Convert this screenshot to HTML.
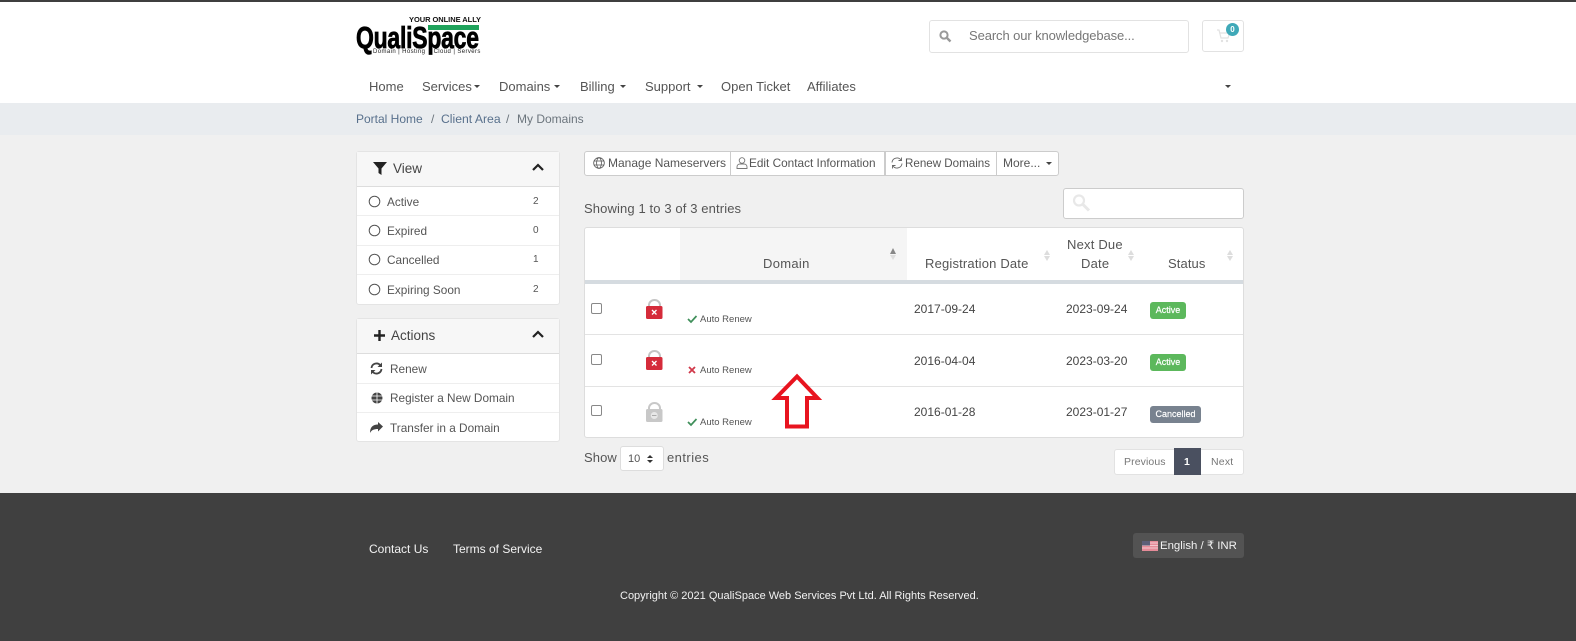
<!DOCTYPE html>
<html><head><meta charset="utf-8"><title>My Domains</title>
<style>
html,body{margin:0;padding:0}
body{width:1576px;height:641px;position:relative;overflow:hidden;background:#f0f0f0;font-family:"Liberation Sans",sans-serif;color:#555;font-size:13px}
.a{position:absolute;box-sizing:border-box}
.t{position:absolute;white-space:nowrap;line-height:20px;height:20px}
.box{position:absolute;box-sizing:border-box;background:#fff;border:1px solid #ddd;border-radius:3px}
.line{position:absolute;height:1px;background:#eee}
.caret{position:absolute;width:0;height:0;border-left:3px solid transparent;border-right:3px solid transparent;border-top:3px solid #444}
svg{position:absolute;overflow:visible}
.cb{position:absolute;width:11px;height:11px;border:1px solid #888;border-radius:2px;background:#fff;box-sizing:border-box}
.badge{position:absolute;border-radius:3px;color:#fff;font-size:9px;text-align:center;height:17px;line-height:17px;-webkit-text-stroke:.2px #fff}
.sort{position:absolute;width:0;height:0;border-left:3px solid transparent;border-right:3px solid transparent}
.s{font-size:11.800px}
.d{font-size:12px;color:#444}
.ar{font-size:9.500px}
</style></head><body>
<div class="a" style="left:0;top:0;width:1576px;height:2px;background:#3f3f3f"></div>
<div class="a" style="left:0;top:2px;width:1576px;height:101px;background:#fff"></div>
<div class="a" style="left:0;top:103px;width:1576px;height:32px;background:#e9ecef"></div>
<div class="t" style="left:409px;top:10px;font-size:7.500px;font-weight:bold;color:#111;letter-spacing:-.05px">YOUR ONLINE ALLY</div>
<div class="a" style="left:428px;top:25px;width:51px;height:5px;background:#1fa35c"></div>
<div class="t" style="left:356px;top:26px;font-size:31px;line-height:24px;height:24px;font-weight:bold;color:#000;letter-spacing:-.3px;transform-origin:left top;transform:scaleX(.74);-webkit-text-stroke:.8px #000">QualiSpace</div>
<div class="t" style="left:373px;top:42px;font-size:6px;color:#222;letter-spacing:.4px">Domain | Hosting&nbsp;&nbsp;&nbsp;&nbsp;Cloud | Servers</div>
<div class="t" style="left:369px;top:77px">Home</div>
<div class="t" style="left:422px;top:77px">Services</div><div class="caret" style="left:474px;top:85px"></div>
<div class="t" style="left:499px;top:77px">Domains</div><div class="caret" style="left:554px;top:85px"></div>
<div class="t" style="left:580px;top:77px">Billing</div><div class="caret" style="left:620px;top:85px"></div>
<div class="t" style="left:645px;top:77px">Support</div><div class="caret" style="left:697px;top:85px"></div>
<div class="t" style="left:721px;top:77px">Open Ticket</div>
<div class="t" style="left:807px;top:77px">Affiliates</div>
<div class="caret" style="left:1225px;top:85px"></div>
<div class="box" style="left:929px;top:20px;width:260px;height:33px;border-color:#e2e2e2"></div>
<svg style="left:939px;top:30px" width="13" height="13" viewBox="0 0 13 13"><circle cx="5" cy="5" r="3.600" fill="none" stroke="#999" stroke-width="2"/><path d="M8 8l3.500 3.500" stroke="#999" stroke-width="2.400"/></svg>
<div class="t" style="left:969px;top:26px;color:#777;letter-spacing:-.1px">Search our knowledgebase...</div>
<div class="box" style="left:1202px;top:20px;width:42px;height:32px;border-color:#e2e2e2"></div>
<svg style="left:1216px;top:29px" width="15" height="14" viewBox="0 0 15 14"><path d="M1 1h2l2 8h7l1.500-5H4" fill="none" stroke="#e2e2e2" stroke-width="1.200"/><circle cx="6" cy="12" r="1.200" fill="#e2e2e2"/><circle cx="11" cy="12" r="1.200" fill="#e2e2e2"/></svg>
<div class="a" style="left:1226px;top:23px;width:13px;height:13px;border-radius:50%;background:#3fa9b8;color:#fff;font-size:8px;font-weight:bold;text-align:center;line-height:13px">0</div>

<div class="t" style="left:356px;top:109px;font-size:12px;color:#58708c">Portal Home</div>
<div class="t" style="left:431px;top:109px;font-size:12px;color:#6c757d">/</div>
<div class="t" style="left:441px;top:109px;font-size:12.200px;color:#58708c">Client Area</div>
<div class="t" style="left:506px;top:109px;font-size:12px;color:#6c757d">/</div>
<div class="t" style="left:517px;top:109px;font-size:12px;color:#6c757d">My Domains</div>

<div class="box" style="left:356px;top:151px;width:204px;height:154px;border-color:#e4e4e4"></div>
<div class="a" style="left:357px;top:152px;width:202px;height:35px;background:#f7f7f7;border-bottom:1px solid #ddd"></div>
<svg style="left:373px;top:161px" width="14" height="14" viewBox="0 0 14 14"><path d="M0 1h14L8.500 7.500V14L5.500 12V7.500z" fill="#222"/></svg>
<div class="t" style="left:393px;top:159px;font-size:13.500px;color:#444">View</div>
<svg style="left:532px;top:163px" width="12" height="8" viewBox="0 0 12 8"><path d="M1 7l5-5 5 5" fill="none" stroke="#222" stroke-width="2.200"/></svg>
<div class="line" style="left:357px;top:215px;width:202px"></div>
<div class="line" style="left:357px;top:245px;width:202px"></div>
<div class="line" style="left:357px;top:274px;width:202px"></div>
<svg style="left:368px;top:195px" width="13" height="100" viewBox="0 0 13 100" fill="none" stroke="#555" stroke-width="1"><circle cx="6.500" cy="6.500" r="5.300"/><circle cx="6.500" cy="35.500" r="5.300"/><circle cx="6.500" cy="64.500" r="5.300"/><circle cx="6.500" cy="94.500" r="5.300"/></svg>
<div class="t s" style="left:387px;top:192px">Active</div><div class="t" style="left:533px;top:192px;font-size:10px">2</div>
<div class="t s" style="left:387px;top:221px">Expired</div><div class="t" style="left:533px;top:221px;font-size:10px">0</div>
<div class="t s" style="left:387px;top:250px">Cancelled</div><div class="t" style="left:533px;top:250px;font-size:10px">1</div>
<div class="t s" style="left:387px;top:280px">Expiring Soon</div><div class="t" style="left:533px;top:280px;font-size:10px">2</div>

<div class="box" style="left:356px;top:318px;width:204px;height:124px;border-color:#e4e4e4"></div>
<div class="a" style="left:357px;top:319px;width:202px;height:35px;background:#f7f7f7;border-bottom:1px solid #ddd"></div>
<svg style="left:373px;top:329px" width="13" height="13" viewBox="0 0 13 13"><path d="M6.500 1v11M1 6.500h11" stroke="#222" stroke-width="2.400"/></svg>
<div class="t" style="left:391px;top:326px;font-size:13.500px;color:#444">Actions</div>
<svg style="left:532px;top:330px" width="12" height="8" viewBox="0 0 12 8"><path d="M1 7l5-5 5 5" fill="none" stroke="#222" stroke-width="2.200"/></svg>
<div class="line" style="left:357px;top:383px;width:202px"></div>
<div class="line" style="left:357px;top:412px;width:202px"></div>
<svg style="left:370px;top:362px" width="13" height="13" viewBox="0 0 13 13" fill="none" stroke="#444" stroke-width="1.800"><path d="M1.500 6A5 5 0 0 1 10.500 3.500"/><path d="M11.500 7A5 5 0 0 1 2.500 9.500"/><path d="M12 0.500V5H7.500z" fill="#444" stroke="none"/><path d="M1 12.500V8h4.500z" fill="#444" stroke="none"/></svg>
<svg style="left:371px;top:392px" width="12" height="12" viewBox="0 0 12 12"><circle cx="6" cy="6" r="5.500" fill="#444"/><path d="M0 4h12M0 8h12M6 0v12" stroke="#fff" stroke-width=".8"/></svg>
<svg style="left:370px;top:422px" width="13" height="12" viewBox="0 0 13 12"><path d="M13 4.500L8 0v2.500C3 2.500 0 5 0 11c1.500-3 4-4 8-4v2.500z" fill="#444"/></svg>
<div class="t s" style="left:390px;top:359px">Renew</div>
<div class="t s" style="left:390px;top:388px">Register a New Domain</div>
<div class="t s" style="left:390px;top:418px">Transfer in a Domain</div>

<div class="box" style="left:584px;top:151px;width:475px;height:25px;border-color:#ccc"></div>
<div class="a" style="left:730px;top:151px;width:1px;height:25px;background:#ccc"></div>
<div class="a" style="left:884px;top:151px;width:2px;height:25px;background:#ccc"></div>
<div class="a" style="left:996px;top:151px;width:1px;height:25px;background:#ccc"></div>
<svg style="left:593px;top:157px" width="12" height="12" viewBox="0 0 12 12" fill="none" stroke="#555" stroke-width=".8"><circle cx="6" cy="6" r="5.300"/><ellipse cx="6" cy="6" rx="2.400" ry="5.300"/><path d="M.7 4h10.600M.7 8h10.600"/></svg>
<div class="t" style="left:608px;top:153px;font-size:12px">Manage Nameservers</div>
<svg style="left:736px;top:157px" width="12" height="12" viewBox="0 0 12 12" fill="none" stroke="#777" stroke-width=".9"><circle cx="6" cy="3.500" r="2.800"/><path d="M1 11.500V10c0-2 1.500-3 3-3h4c1.500 0 3 1 3 3v1.500z"/></svg>
<div class="t" style="left:749px;top:153px;font-size:11.800px">Edit Contact Information</div>
<svg style="left:891px;top:157px" width="12" height="12" viewBox="0 0 12 12" fill="none" stroke="#666" stroke-width=".9"><path d="M1 5.500A5 5 0 0 1 10 3"/><path d="M11 6.500A5 5 0 0 1 2 9"/><path d="M10.500 .5V3.500H7.500M1.500 11.500V8.500H4.500"/></svg>
<div class="t" style="left:905px;top:154px;font-size:11.600px">Renew Domains</div>
<div class="t" style="left:1003px;top:153px;font-size:12px">More...</div>
<div class="caret" style="left:1046px;top:162px"></div>

<div class="t" style="left:584px;top:199px;letter-spacing:.12px">Showing 1 to 3 of 3 entries</div>
<div class="box" style="left:1063px;top:188px;width:181px;height:31px;border-color:#ccc"></div>
<svg style="left:1071px;top:193px" width="20" height="20" viewBox="0 0 20 20"><circle cx="8" cy="7.500" r="5" fill="none" stroke="#e8e8e8" stroke-width="2.200"/><path d="M12 11.500l6 6" stroke="#e8e8e8" stroke-width="3"/></svg>

<div class="box" style="left:584px;top:227px;width:660px;height:211px;border-color:#ddd"></div>
<div class="a" style="left:680px;top:228px;width:227px;height:52px;background:#f5f5f5"></div>
<div class="a" style="left:585px;top:280px;width:658px;height:4px;background:#d5dbe0"></div>
<div class="line" style="left:585px;top:334px;width:658px;background:#e3e3e3"></div>
<div class="line" style="left:585px;top:386px;width:658px;background:#e3e3e3"></div>
<div class="t" style="left:763px;top:254px;letter-spacing:.3px">Domain</div>
<div class="t" style="left:925px;top:254px;letter-spacing:.18px">Registration Date</div>
<div class="t" style="left:1067px;top:235px;letter-spacing:.2px">Next Due</div>
<div class="t" style="left:1081px;top:254px;letter-spacing:.2px">Date</div>
<div class="t" style="left:1168px;top:254px;letter-spacing:.1px">Status</div>
<div class="sort" style="left:890px;top:248px;border-bottom:6px solid #888"></div><div class="sort" style="left:890px;top:255px;border-top:5px solid #ddd"></div>
<div class="sort" style="left:1044px;top:250px;border-bottom:5px solid #ddd"></div><div class="sort" style="left:1044px;top:256px;border-top:5px solid #ddd"></div>
<div class="sort" style="left:1128px;top:250px;border-bottom:5px solid #ddd"></div><div class="sort" style="left:1128px;top:256px;border-top:5px solid #ddd"></div>
<div class="sort" style="left:1227px;top:250px;border-bottom:5px solid #ddd"></div><div class="sort" style="left:1227px;top:256px;border-top:5px solid #ddd"></div>

<div class="cb" style="left:591px;top:303px"></div><div class="cb" style="left:591px;top:354px"></div><div class="cb" style="left:591px;top:405px"></div>
<svg style="left:646px;top:299px" width="17" height="20" viewBox="0 0 17 20"><path d="M3 9V6a5.500 5 0 0 1 11 0v3" fill="none" stroke="#c4c4c4" stroke-width="2"/><rect y="7" width="16.500" height="13" rx="1.500" fill="#d52b3a"/><path d="M6 11l4.500 4.500M10.500 11L6 15.500" stroke="#fff" stroke-width="1.300"/></svg>
<svg style="left:646px;top:350px" width="17" height="20" viewBox="0 0 17 20"><path d="M3 9V6a5.500 5 0 0 1 11 0v3" fill="none" stroke="#c4c4c4" stroke-width="2"/><rect y="7" width="16.500" height="13" rx="1.500" fill="#d52b3a"/><path d="M6 11l4.500 4.500M10.500 11L6 15.500" stroke="#fff" stroke-width="1.300"/></svg>
<svg style="left:646px;top:402px" width="17" height="20" viewBox="0 0 17 20"><path d="M3 9V6a5.500 5 0 0 1 11 0v3" fill="none" stroke="#c8c8c8" stroke-width="2"/><rect y="7" width="16.500" height="13" rx="1.500" fill="#c8c8c8"/><circle cx="8.250" cy="13.500" r="3.500" fill="#e8e8e8"/><path d="M6 13.500h4.500" stroke="#aaa" stroke-width="1"/></svg>
<svg style="left:687px;top:315px" width="10" height="8" viewBox="0 0 10 8"><path d="M1 4l3 3 5.500-6" fill="none" stroke="#3f8f5a" stroke-width="1.700"/></svg>
<svg style="left:688px;top:366px" width="8" height="8" viewBox="0 0 8 8"><path d="M1 1l6 6M7 1L1 7" fill="none" stroke="#d0394a" stroke-width="1.800"/></svg>
<svg style="left:687px;top:418px" width="10" height="8" viewBox="0 0 10 8"><path d="M1 4l3 3 5.500-6" fill="none" stroke="#3f8f5a" stroke-width="1.700"/></svg>
<div class="t ar" style="left:700px;top:310px">Auto Renew</div>
<div class="t ar" style="left:700px;top:361px">Auto Renew</div>
<div class="t ar" style="left:700px;top:413px">Auto Renew</div>
<svg style="left:774px;top:374px" width="47" height="56" viewBox="0 0 47 56"><path d="M23 2.500L43.500 24H33V52.500H13V24H2z" fill="#fff" stroke="#e8141f" stroke-width="4"/></svg>
<div class="t d" style="left:914px;top:299px">2017-09-24</div>
<div class="t d" style="left:914px;top:351px">2016-04-04</div>
<div class="t d" style="left:914px;top:402px">2016-01-28</div>
<div class="t d" style="left:1066px;top:299px">2023-09-24</div>
<div class="t d" style="left:1066px;top:351px">2023-03-20</div>
<div class="t d" style="left:1066px;top:402px">2023-01-27</div>
<div class="badge" style="left:1150px;top:302px;width:36px;background:#5cb85c">Active</div>
<div class="badge" style="left:1150px;top:354px;width:36px;background:#5cb85c">Active</div>
<div class="badge" style="left:1150px;top:406px;width:51px;background:#78828f">Cancelled</div>

<div class="t" style="left:584px;top:448px;letter-spacing:.1px">Show</div>
<div class="box" style="left:620px;top:446px;width:44px;height:25px;border-color:#ddd"></div>
<div class="t" style="left:628px;top:449px;font-size:11px">10</div>
<div class="sort" style="left:647px;top:455px;border-bottom:3px solid #333"></div><div class="sort" style="left:647px;top:460px;border-top:3px solid #333"></div>
<div class="t" style="left:667px;top:448px;letter-spacing:.45px">entries</div>
<div class="box" style="left:1114px;top:449px;width:130px;height:26px;border-color:#e2e2e2"></div>
<div class="a" style="left:1174px;top:448px;width:27px;height:27px;background:#4a5060"></div>
<div class="t" style="left:1124px;top:452px;font-size:10.500px;color:#777;letter-spacing:.1px">Previous</div>
<div class="t" style="left:1184px;top:452px;font-size:10.500px;color:#fff;font-weight:bold">1</div>
<div class="t" style="left:1211px;top:452px;font-size:10.500px;color:#777;letter-spacing:.2px">Next</div>

<div class="a" style="left:0;top:493px;width:1576px;height:148px;background:#404040"></div>
<div class="t" style="left:369px;top:539px;font-size:12px;color:#f2f2f2">Contact Us</div>
<div class="t" style="left:453px;top:539px;font-size:12px;color:#f2f2f2">Terms of Service</div>
<div class="a" style="left:1133px;top:533px;width:111px;height:25px;background:#535353;border-radius:3px"></div>
<svg style="left:1142px;top:541px" width="16" height="10" viewBox="0 0 16 10"><rect width="16" height="10" fill="#e58b98"/><path d="M0 2h16M0 4.500h16M0 7h16" stroke="#f2c8cf"/><rect width="8" height="4.500" fill="#5c5f78"/></svg>
<div class="t" style="left:1160px;top:536px;color:#f2f2f2;font-size:11.400px">English / ₹ INR</div>
<div class="t" style="left:620px;top:586px;color:#f2f2f2;font-size:11px">Copyright © 2021 QualiSpace Web Services Pvt Ltd. All Rights Reserved.</div>
</body></html>
